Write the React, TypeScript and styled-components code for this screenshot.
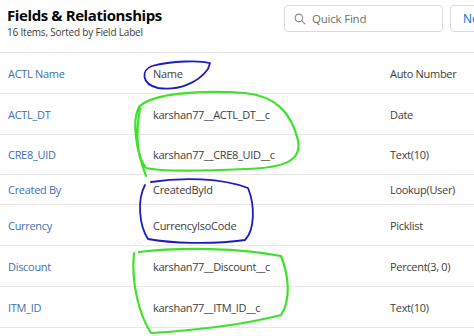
import React from "react"
import styled, { createGlobalStyle } from "styled-components"

const GlobalStyle = createGlobalStyle`
    html, body {
        margin: 0;
        padding: 0;
        background: #ffffff;
    }
    body {
        font-family: "Open Sans", "Noto Sans", sans-serif;
        color: #3e3e3c;
        overflow: hidden;
    }
`

type FieldRow = {
    label: string
    apiName: string
    dataType: string
    height: number
}

const rows: FieldRow[] = [
    { label: 'ACTL Name', apiName: 'Name', dataType: 'Auto Number', height: 41 },
    { label: 'ACTL_DT', apiName: 'karshan77__ACTL_DT__c', dataType: 'Date', height: 41 },
    { label: 'CRE8_UID', apiName: 'karshan77__CRE8_UID__c', dataType: 'Text(10)', height: 40 },
    { label: 'Created By', apiName: 'CreatedById', dataType: 'Lookup(User)', height: 30 },
    { label: 'Currency', apiName: 'CurrencyIsoCode', dataType: 'Picklist', height: 41 },
    { label: 'Discount', apiName: 'karshan77__Discount__c', dataType: 'Percent(3, 0)', height: 41 },
    { label: 'ITM_ID', apiName: 'karshan77__ITM_ID__c', dataType: 'Text(10)', height: 41 },
]

export default function App () {
    return (
        <Page>
            <GlobalStyle />
            <Header>
                <TitleBlock>
                    <Title>Fields &amp; Relationships</Title>
                    <Subtitle>16 Items, Sorted by Field Label</Subtitle>
                </TitleBlock>
                <Actions>
                    <SearchBox>
                        <svg width="12" height="12" viewBox="0 0 16 16" fill="none">
                            <circle cx="6.5" cy="6.5" r="5" stroke="#8a8886" strokeWidth="1.4" />
                            <line x1="10.2" y1="10.2" x2="14.5" y2="14.5" stroke="#8a8886" strokeWidth="1.4" strokeLinecap="round" />
                        </svg>
                        <SearchText>Quick Find</SearchText>
                    </SearchBox>
                    <NewButton>New</NewButton>
                </Actions>
            </Header>
            <Table>
                {rows.map(row => (
                    <Row key={row.label} $height={row.height}>
                        <LabelCell>{row.label}</LabelCell>
                        <Cell>{row.apiName}</Cell>
                        <Cell>{row.dataType}</Cell>
                    </Row>
                ))}
            </Table>
            <Markup width="474" height="336" viewBox="0 0 474 336" fill="none">
                <path
                    d="M209 63 C200 60 172 61 152 66 C141 70 141 84 158 88 C178 91 198 83 208 69 L210 63"
                    stroke="#1c1cc4" strokeWidth="1.8" strokeLinecap="round" strokeLinejoin="round"
                />
                <path
                    d="M146 176 C137 152 131 122 139 107 C152 93 200 90 245 93 C275 96 291 112 298 140 C302 160 286 168 245 169 C200 171 162 172 146 168 C138 158 135 138 140 108"
                    stroke="#3de32a" strokeWidth="2.2" strokeLinecap="round" strokeLinejoin="round"
                />
                <path
                    d="M151 182 C182 177 222 178 248 188 C255 205 255 230 245 240 C210 245 170 243 148 239 C139 225 137 200 145 185"
                    stroke="#1c1cc4" strokeWidth="1.8" strokeLinecap="round" strokeLinejoin="round"
                />
                <path
                    d="M139 252 C180 247 240 248 281 256 C289 276 291 300 281 315 C250 323 200 330 151 333 C139 315 131 282 134 253"
                    stroke="#3de32a" strokeWidth="2.2" strokeLinecap="round" strokeLinejoin="round"
                />
            </Markup>
        </Page>
    )
}

const Page = styled.div`
    position: relative;
    width: 474px;
    height: 336px;
    overflow: hidden;
    background: #ffffff;
`

const Header = styled.div`
    display: flex;
    justify-content: space-between;
    align-items: flex-start;
    height: 53px;
    box-sizing: border-box;
    padding: 5px 0 0 7px;
    border-bottom: 1px solid #e4e4e4;
`

const TitleBlock = styled.div`
    display: flex;
    flex-direction: column;
`

const Title = styled.div`
    font-size: 15px;
    font-weight: 700;
    letter-spacing: -0.4px;
    line-height: 21px;
    color: #080707;
`

const Subtitle = styled.div`
    font-size: 10px;
    letter-spacing: -0.2px;
    line-height: 13px;
    color: #3e3e3c;
`

const Actions = styled.div`
    display: flex;
    gap: 7px;
    margin-right: -27px;
`

const SearchBox = styled.div`
    display: flex;
    align-items: center;
    gap: 6px;
    width: 159px;
    height: 27px;
    box-sizing: border-box;
    padding: 0 9px;
    border: 1px solid #dddbda;
    border-radius: 4px;
`

const SearchText = styled.span`
    font-size: 11.5px;
    letter-spacing: -0.2px;
    color: #706e6b;
`

const NewButton = styled.div`
    display: flex;
    align-items: center;
    height: 27px;
    box-sizing: border-box;
    padding: 0 12px;
    border: 1px solid #dddbda;
    border-radius: 4px;
    font-size: 12px;
    color: #0070d2;
`

const Table = styled.div`
    display: flex;
    flex-direction: column;
`

const Row = styled.div<{ $height: number }>`
    display: grid;
    grid-template-columns: 145px 237px 1fr;
    align-items: center;
    height: ${p => p.$height}px;
    box-sizing: border-box;
    padding-left: 8px;
    border-bottom: 1px solid #e8e8e8;
`

const Cell = styled.div`
    font-size: 11px;
    letter-spacing: -0.3px;
    color: #3e3e3c;
    white-space: nowrap;
`

const LabelCell = styled(Cell)`
    color: #3e6fb3;
`

const Markup = styled.svg`
    position: absolute;
    left: 0;
    top: 0;
    pointer-events: none;
`
